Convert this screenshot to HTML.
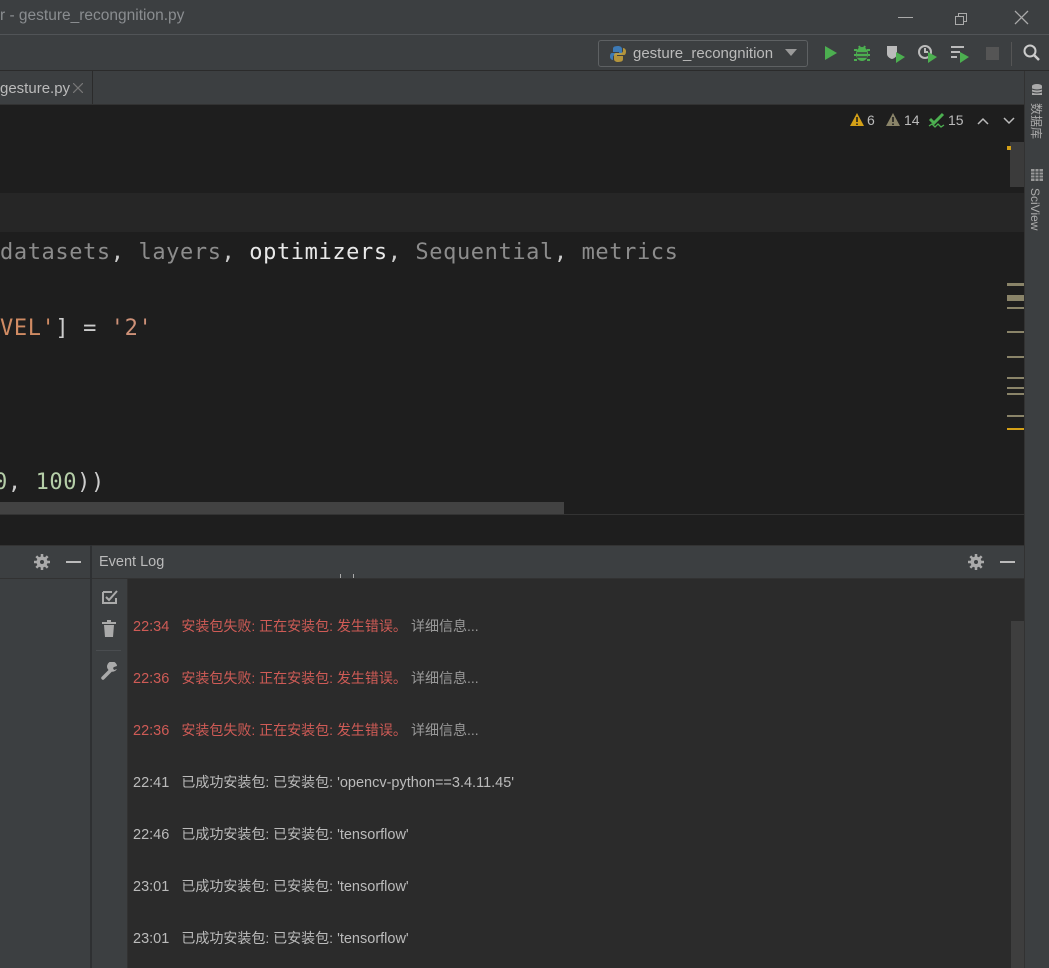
<!DOCTYPE html>
<html><head><meta charset="utf-8"><style>
*{margin:0;padding:0;box-sizing:border-box}
body{width:1049px;height:968px;overflow:hidden;background:#3c3f41;position:relative;font-family:"Liberation Sans","Noto Sans CJK SC",sans-serif;color:#bbb}
.a{position:absolute}
.mono{font-family:"DejaVu Sans Mono","Liberation Mono",monospace;font-size:22px;white-space:pre;letter-spacing:0.6px}
.log{position:absolute;left:133px;font-size:14.5px;white-space:pre;color:#bbb}
.log b{font-weight:normal;font-size:14px}
.red{color:#cf5b56}
</style></head><body>
<div class="a" style="left:0;top:0;width:1049px;height:35px;background:#3c3f41;border-bottom:1px solid #515457"></div>
<div class="a" style="left:0;top:7px;font-size:15.5px;color:#8a8d90">r - gesture_recongnition.py</div>
<div class="a" style="left:898px;top:17px;width:15px;height:1px;background:#aaa"></div>
<div class="a" style="left:958px;top:13px;width:9px;height:9px;border:1px solid #aaa"></div>
<div class="a" style="left:955px;top:16px;width:9px;height:9px;border:1px solid #aaa;background:#3c3f41"></div>
<svg class="a" style="left:1014px;top:10px" width="15" height="15"><path d="M1 1L14 14M14 1L1 14" stroke="#aaa" stroke-width="1.3"/></svg>
<div class="a" style="left:0;top:70px;width:1049px;height:1px;background:#2b2b2b"></div>
<div class="a" style="left:598px;top:40px;width:210px;height:27px;border:1px solid #5e6163;border-radius:3px"></div>
<svg class="a" style="left:609px;top:45px" width="18" height="18"><path d="M9 1C4 1 4 3 4 4V7H10V8H3C1 8 1 11 1 12S2 15 4 15V12C4 11 5 10 6 10H11C12 10 13 9 13 8V4C13 2 11 1 9 1Z" fill="#3d7ab6"/><path d="M9 17C14 17 14 15 14 14V11H8V10H15C17 10 17 7 17 6S16 3 14 3V6C14 7 13 8 12 8H7C6 8 5 9 5 10V14C5 16 7 17 9 17Z" fill="#c8a33c" opacity=".85"/></svg>
<div class="a" style="left:633px;top:45px;font-size:15px;color:#bbb">gesture_recongnition</div>
<svg class="a" style="left:785px;top:49px" width="12" height="8"><path d="M0 0H12L6 7Z" fill="#999"/></svg>
<svg class="a" style="left:824px;top:45px" width="14" height="16"><path d="M1 1L13 8L1 15Z" fill="#4caf50"/></svg>
<svg class="a" style="left:853px;top:44px" width="18" height="18"><ellipse cx="9" cy="10" rx="6" ry="7" fill="#4caf50"/><path d="M1 6H4M14 6H17M1 11H3M15 11H17M1 16H4M14 16H17M6 2L7 4M12 2L11 4" stroke="#4caf50" stroke-width="2"/><path d="M4 9H14M4 13H14" stroke="#3c3f41" stroke-width="1.5"/></svg>
<svg class="a" style="left:885px;top:44px" width="22" height="20"><path d="M2 2H12V10C12 13 8 15 7 15C6 15 2 13 2 10Z" fill="#bbb"/><path d="M11 8L20 13L11 19Z" fill="#4caf50"/></svg>
<svg class="a" style="left:917px;top:44px" width="22" height="20"><circle cx="8" cy="8" r="6" fill="none" stroke="#bbb" stroke-width="2"/><path d="M8 4V8H11" stroke="#bbb" stroke-width="2" fill="none"/><path d="M11 8L20 13L11 19Z" fill="#4caf50"/></svg>
<svg class="a" style="left:950px;top:44px" width="22" height="20"><path d="M1 3H14M1 8H10M1 13H7" stroke="#bbb" stroke-width="2"/><path d="M10 8L19 13L10 19Z" fill="#4caf50"/></svg>
<div class="a" style="left:986px;top:47px;width:13px;height:13px;background:#555"></div>
<div class="a" style="left:1011px;top:42px;width:1px;height:24px;background:#555"></div>
<svg class="a" style="left:1023px;top:44px" width="18" height="18"><circle cx="7" cy="7" r="5.5" fill="none" stroke="#ccc" stroke-width="2"/><path d="M11 11L16 16" stroke="#ccc" stroke-width="2.5"/></svg>
<div class="a" style="left:0;top:71px;width:1024px;height:34px;background:#3c3f41;border-bottom:1px solid #323232"></div>
<div class="a" style="left:0;top:80px;font-size:15px;color:#bbb">gesture.py</div>
<svg class="a" style="left:73px;top:83px" width="10" height="10"><path d="M0 0L10 10M10 0L0 10" stroke="#777" stroke-width="1.2"/></svg>
<div class="a" style="left:92px;top:71px;width:1px;height:33px;background:#2b2b2b"></div>
<div class="a" style="left:1024px;top:71px;width:25px;height:897px;background:#3c3f41;border-left:1px solid #323232"></div>
<svg class="a" style="left:1031px;top:83px" width="12" height="14"><ellipse cx="6" cy="3" rx="5" ry="2" fill="#aaa"/><rect x="1" y="3" width="10" height="9" fill="#aaa"/><path d="M1 6Q6 8 11 6M1 9Q6 11 11 9" stroke="#3c3f41" fill="none"/></svg>
<div class="a" style="left:1028px;top:103px;font-size:12px;color:#aaa;writing-mode:vertical-rl;text-orientation:sideways">数据库</div>
<svg class="a" style="left:1031px;top:169px" width="12" height="12"><rect width="12" height="12" fill="#999"/><path d="M0 3H12M0 6H12M0 9H12M4 0V12M8 0V12" stroke="#3c3f41"/></svg>
<div class="a" style="left:1028px;top:188px;font-size:12px;color:#aaa;writing-mode:vertical-rl">SciView</div>
<div class="a" style="left:0;top:105px;width:1024px;height:410px;background:#1e1e1e"></div>
<div class="a" style="left:0;top:193px;width:1024px;height:39px;background:#262626"></div>
<div class="a" style="left:1010px;top:142px;width:14px;height:45px;background:#3b3b3b"></div>
<div class="a" style="left:1007px;top:146px;width:4px;height:4px;background:#d4a017"></div>
<svg class="a" style="left:849px;top:112px" width="16" height="15"><path d="M8 1L15 14H1Z" fill="#d4a017"/><path d="M8 5V10M8 11.5V13" stroke="#1e1e1e" stroke-width="1.6"/></svg>
<div class="a" style="left:867px;top:112px;font-size:14px;color:#bbb">6</div>
<svg class="a" style="left:885px;top:112px" width="16" height="15"><path d="M8 1L15 14H1Z" fill="#8a8469"/><path d="M8 5V10M8 11.5V13" stroke="#1e1e1e" stroke-width="1.6"/></svg>
<div class="a" style="left:904px;top:112px;font-size:14px;color:#bbb">14</div>
<svg class="a" style="left:928px;top:112px" width="18" height="18"><path d="M2 7L6 11L15 2" stroke="#4caf50" stroke-width="3" fill="none"/><path d="M1 14L4 12L7 15L10 12L13 15L16 13" stroke="#4caf50" stroke-width="1.3" fill="none"/></svg>
<div class="a" style="left:948px;top:112px;font-size:14px;color:#bbb">15</div>
<svg class="a" style="left:977px;top:117px" width="12" height="8"><path d="M1 7L6 2L11 7" stroke="#bbb" stroke-width="1.5" fill="none"/></svg>
<svg class="a" style="left:1003px;top:117px" width="12" height="8"><path d="M1 1L6 6L11 1" stroke="#bbb" stroke-width="1.5" fill="none"/></svg>
<div class="a mono" style="left:0;top:240px;color:#8c8c8c">datasets<span style="color:#ccc">,</span> layers<span style="color:#ccc">,</span> <span style="color:#e8e8e8">optimizers</span><span style="color:#ccc">,</span> Sequential<span style="color:#ccc">,</span> metrics</div>
<div class="a mono" style="left:0;top:316px;color:#ce9178"><span style="color:#d08b63">VEL'</span><span style="color:#ccc">] = </span>'2'</div>
<div class="a mono" style="left:-6px;top:470px;color:#b5cea8">0<span style="color:#ccc">, </span>100<span style="color:#ccc">))</span></div>
<div class="a" style="left:1007px;top:283px;width:17px;height:3px;background:#8a8469"></div>
<div class="a" style="left:1007px;top:295px;width:17px;height:6px;background:#8a8469"></div>
<div class="a" style="left:1007px;top:307px;width:17px;height:2px;background:#8a8469"></div>
<div class="a" style="left:1007px;top:331px;width:17px;height:2px;background:#8a8469"></div>
<div class="a" style="left:1007px;top:356px;width:17px;height:2px;background:#8a8469"></div>
<div class="a" style="left:1007px;top:377px;width:17px;height:2px;background:#8a8469"></div>
<div class="a" style="left:1007px;top:387px;width:17px;height:2px;background:#8a8469"></div>
<div class="a" style="left:1007px;top:393px;width:17px;height:2px;background:#8a8469"></div>
<div class="a" style="left:1007px;top:415px;width:17px;height:2px;background:#8a8469"></div>
<div class="a" style="left:1007px;top:428px;width:17px;height:2px;background:#d4a017"></div>
<div class="a" style="left:0;top:502px;width:564px;height:12px;background:#424242"></div>
<div class="a" style="left:0;top:514px;width:1024px;height:31px;background:#1e1e1e;border-top:1px solid #333"></div>
<div class="a" style="left:0;top:545px;width:1024px;height:34px;background:#3c3f41;border-bottom:1px solid #323232;border-top:1px solid #333"></div>
<svg class="a" style="left:34px;top:554px" width="16" height="16"><circle cx="8" cy="8" r="5.5" fill="#aaa"/><path d="M8 0V16M0 8H16M2.3 2.3L13.7 13.7M13.7 2.3L2.3 13.7" stroke="#aaa" stroke-width="2.5"/><circle cx="8" cy="8" r="2" fill="#3c3f41"/></svg>
<div class="a" style="left:66px;top:561px;width:15px;height:2px;background:#bbb"></div>
<div class="a" style="left:90px;top:545px;width:2px;height:423px;background:#2e3032"></div>
<div class="a" style="left:99px;top:554px;font-size:14.5px;color:#bbb">Event Log</div>
<svg class="a" style="left:968px;top:554px" width="16" height="16"><circle cx="8" cy="8" r="5.5" fill="#aaa"/><path d="M8 0V16M0 8H16M2.3 2.3L13.7 13.7M13.7 2.3L2.3 13.7" stroke="#aaa" stroke-width="2.5"/><circle cx="8" cy="8" r="2" fill="#3c3f41"/></svg>
<div class="a" style="left:1000px;top:561px;width:15px;height:2px;background:#bbb"></div>
<div class="a" style="left:127px;top:579px;width:885px;height:389px;background:#2b2b2b;border-left:1px solid #323232"></div>
<div class="a" style="left:1011px;top:579px;width:13px;height:389px;background:#2b2b2b"></div>
<div class="a" style="left:1011px;top:621px;width:13px;height:347px;background:#3e3e3e"></div>
<svg class="a" style="left:101px;top:589px" width="18" height="16"><path d="M2 3H11M2 3V14H15V9" stroke="#aaa" stroke-width="2" fill="none"/><path d="M5 8L8 11L16 2" stroke="#aaa" stroke-width="2" fill="none"/></svg>
<svg class="a" style="left:102px;top:620px" width="14" height="18"><path d="M0 3H14M5 1H9" stroke="#aaa" stroke-width="2"/><path d="M2 5H12L11 17H3Z" fill="#aaa"/></svg>
<div class="a" style="left:96px;top:650px;width:25px;height:1px;background:#4a4d50"></div>
<svg class="a" style="left:101px;top:662px" width="18" height="18"><path d="M2 16L10 8" stroke="#aaa" stroke-width="3.5" stroke-linecap="round"/><path d="M9 9A5 5 0 1 1 16 4L13 5L12 6L13 8L16 7A5 5 0 0 1 9 9Z" fill="#aaa"/></svg>
<div class="a" style="left:340px;top:574px;width:1px;height:4px;background:#aaa"></div>
<div class="a" style="left:353px;top:574px;width:1px;height:4px;background:#aaa"></div>
<div class="log red" style="top:616px">22:34   <b>安装包失败: 正在安装包: 发生错误。</b> <span style="color:#999"><b>详细信息...</b></span></div>
<div class="log red" style="top:668px">22:36   <b>安装包失败: 正在安装包: 发生错误。</b> <span style="color:#999"><b>详细信息...</b></span></div>
<div class="log red" style="top:720px">22:36   <b>安装包失败: 正在安装包: 发生错误。</b> <span style="color:#999"><b>详细信息...</b></span></div>
<div class="log" style="top:772px">22:41   <b>已成功安装包: 已安装包:</b> 'opencv-python==3.4.11.45'</div>
<div class="log" style="top:824px">22:46   <b>已成功安装包: 已安装包:</b> 'tensorflow'</div>
<div class="log" style="top:876px">23:01   <b>已成功安装包: 已安装包:</b> 'tensorflow'</div>
<div class="log" style="top:928px">23:01   <b>已成功安装包: 已安装包:</b> 'tensorflow'</div>
</body></html>
